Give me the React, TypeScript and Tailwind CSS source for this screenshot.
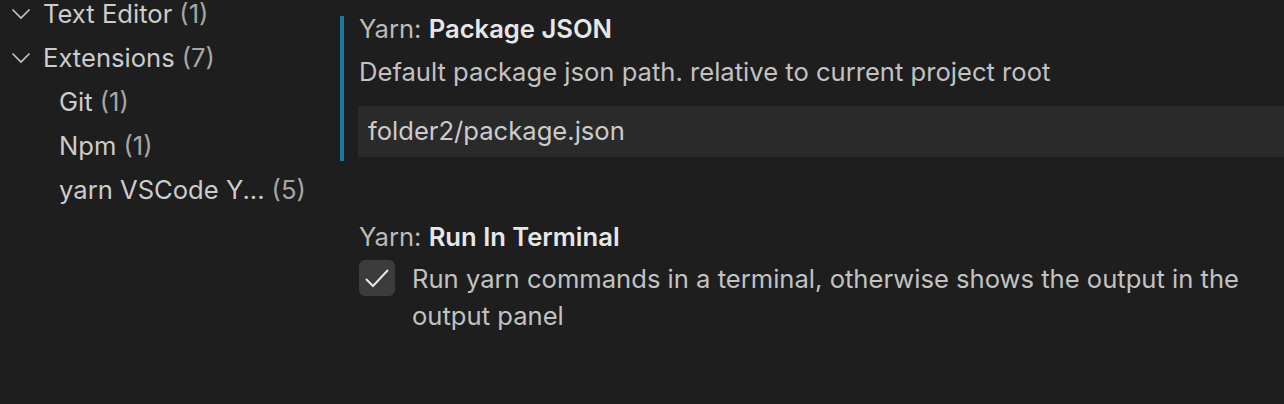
const tree = [
  { label: "Text Editor", count: 1, level: 0, open: true },
  { label: "Extensions", count: 7, level: 0, open: true },
  { label: "Git", count: 1, level: 1 },
  { label: "Npm", count: 1, level: 1 },
  { label: "yarn VSCode Y...", count: 5, level: 1 },
];

function Chevron() {
  return (
    <svg width="20" height="12" viewBox="0 0 20 12" fill="none" className="shrink-0">
      <polyline points="1.5,1.5 10,10 18.5,1.5" stroke="#c5c5c5" strokeWidth="1.6" />
    </svg>
  );
}

export default function App() {
  return (
    <div
      className="w-[1284px] h-[404px] overflow-hidden bg-[#1e1e1e] flex text-[25.6px] antialiased"
      style={{ fontFamily: "Inter, 'Noto Sans', sans-serif" }}
    >
      {/* Table of contents */}
      <div className="w-[340px] shrink-0 -mt-[8px]">
        {tree.map((item) => (
          <div
            key={item.label}
            className={`h-[44px] flex items-center ${item.level === 0 ? "pl-[11px]" : "pl-[59px]"}`}
          >
            {item.level === 0 && (
              <span className="w-[32px] flex items-center">
                <Chevron />
              </span>
            )}
            <span className="text-[#cccccc] whitespace-nowrap">{item.label}</span>
            <span className="text-[#a6a6a6] ml-[7px]">({item.count})</span>
          </div>
        ))}
      </div>

      {/* Settings list */}
      <div className="flex-1 min-w-0">
        <div className="mt-[16px] border-l-4 border-[#1a7aa0] pb-[4px]">
          <div className="pl-[15px] leading-[26px] whitespace-nowrap">
            <span className="text-[#bbbbbb]">Yarn: </span>
            <span className="text-[#e7e7e7] font-semibold">Package JSON</span>
          </div>
          <div className="pl-[15px] mt-[12px] leading-[36px] text-[#c2c2c2] whitespace-nowrap">
            Default package json path. relative to current project root
          </div>
          <div className="ml-[14px] mt-[16px] h-[51px] bg-[#2a2a2a] flex items-center pl-[10px] text-[#cccccc]">
            folder2/package.json
          </div>
        </div>

        <div className="mt-[63px] pl-[19px]">
          <div className="leading-[26px] whitespace-nowrap">
            <span className="text-[#bbbbbb]">Yarn: </span>
            <span className="text-[#e7e7e7] font-semibold">Run In Terminal</span>
          </div>
          <div className="flex mt-[9px]">
            <div className="w-[36px] h-[36px] mt-[1px] shrink-0 rounded-[6px] bg-[#3c3c3c] flex items-center justify-center">
              <svg width="26" height="22" viewBox="0 0 26 22" fill="none">
                <polyline points="2,12 9,19 24,3" stroke="#e8e8e8" strokeWidth="2" />
              </svg>
            </div>
            <div className="ml-[17px] mt-[1px] leading-[37px] text-[#c2c2c2] w-[860px]">
              Run yarn commands in a terminal, otherwise shows the output in the output panel
            </div>
          </div>
        </div>
      </div>
    </div>
  );
}
